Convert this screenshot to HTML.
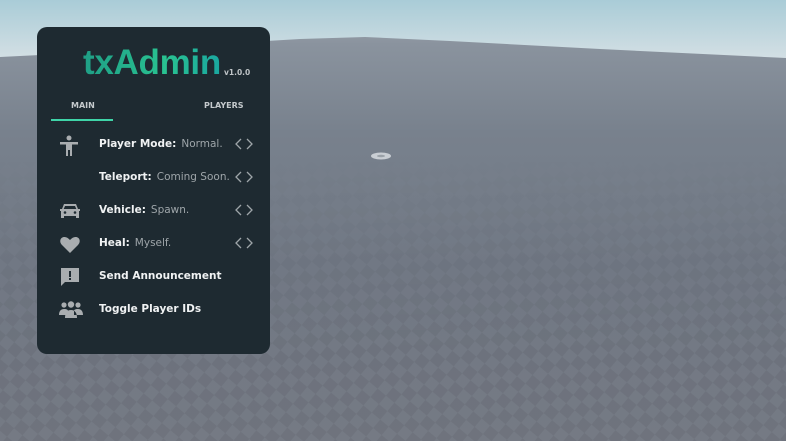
<!DOCTYPE html>
<html><head><meta charset="utf-8"><style>
*{margin:0;padding:0;box-sizing:border-box}
body{width:786px;height:441px;overflow:hidden;position:relative;font-family:"DejaVu Sans","Liberation Sans",sans-serif;background:#6f7682}
svg.bg{position:absolute;left:0;top:0}
.panel{position:absolute;left:37px;top:27px;width:233px;height:327px;background:#1e2a31;border-radius:10px;color:#fff}
.logo{position:absolute;left:46px;top:16px;font-family:"Liberation Sans",sans-serif;font-size:35px;font-weight:bold;letter-spacing:-0.3px;background:linear-gradient(90deg,#1f9f86,#29c291 60%,#1aa7a0);-webkit-background-clip:text;color:transparent}
.ver{position:absolute;left:187px;top:41px;font-size:7.5px;font-weight:bold;color:#bfc4c7}
.tab{position:absolute;top:74px;font-size:8px;font-weight:bold;color:#c5cacd}
.ul{position:absolute;left:14px;top:92px;width:62px;height:2px;background:#3fd4a8}
.row{position:absolute;left:0;width:233px;height:20px;font-size:10.5px}
.row .l{position:absolute;left:62px;top:3px;font-weight:bold;color:#f0f2f3;white-space:nowrap}
.row .v{color:#9ea5a9;font-weight:normal;margin-left:5px}
.row .ar{position:absolute;left:198px;top:3px}
.row svg{position:absolute;left:22px;top:0}
</style></head><body>
<svg class="bg" width="786" height="441">
<defs>
<linearGradient id="sky" x1="0" y1="0" x2="0" y2="1"><stop offset="0" stop-color="#a9ccd7"/><stop offset="1" stop-color="#d3dfe4"/></linearGradient>
<linearGradient id="gr" x1="0" y1="0" x2="0" y2="1"><stop offset="0" stop-color="#a7afb7"/><stop offset="0.1" stop-color="#8a939e"/><stop offset="0.3" stop-color="#78818d"/><stop offset="0.6" stop-color="#717884"/><stop offset="1" stop-color="#757a84"/></linearGradient>
<linearGradient id="fade" x1="0" y1="0" x2="0" y2="1"><stop offset="0.35" stop-color="#fff" stop-opacity="0"/><stop offset="0.8" stop-color="#fff" stop-opacity="1"/></linearGradient>
<mask id="m"><rect width="786" height="441" fill="url(#fade)"/></mask>
<pattern id="ck" width="22" height="22" patternUnits="userSpaceOnUse" patternTransform="rotate(40)"><rect width="11" height="11" fill="#000" opacity="0.05"/><rect x="11" y="11" width="11" height="11" fill="#000" opacity="0.05"/></pattern>
</defs>
<rect width="786" height="441" fill="url(#gr)"/>
<rect width="786" height="441" fill="url(#ck)" mask="url(#m)"/>
<path d="M0 0H786V58L600 49L450 41L365 37L300 39L200 45L100 52L0 57Z" fill="url(#sky)"/>
<ellipse cx="381" cy="156" rx="10" ry="3.5" fill="#c9ced4"/>
<ellipse cx="381" cy="156" rx="4" ry="1.3" fill="#9aa1a8"/>
</svg>
<div class="panel">
<div class="logo">txAdmin</div>
<div class="ver">v1.0.0</div>
<div class="tab" style="left:34px">MAIN</div>
<div class="tab" style="left:167px">PLAYERS</div>
<div class="ul"></div>
<div class="row" style="top:108px"><svg width="20" height="22" viewBox="0 0 20 22"><circle cx="10" cy="3" r="2.5" fill="#a9adb0"/><path d="M1 7h18v2.5h-6V21h-2v-6h-2v6H7V9.5H1z" fill="#a9adb0"/></svg><span class="l">Player Mode:<span class="v">Normal.</span></span><svg class="ar" style="left:198px;top:3px" width="18" height="12" viewBox="0 0 18 12"><path d="M6 1L1 6l5 5M12 1l5 5-5 5" fill="none" stroke="#9ea5a9" stroke-width="1.3"/></svg></div>
<div class="row" style="top:141px"><span class="l">Teleport:<span class="v">Coming Soon.</span></span><svg class="ar" style="left:198px;top:3px" width="18" height="12" viewBox="0 0 18 12"><path d="M6 1L1 6l5 5M12 1l5 5-5 5" fill="none" stroke="#9ea5a9" stroke-width="1.3"/></svg></div>
<div class="row" style="top:174px"><svg width="22" height="20" viewBox="0 0 22 20"><path d="M5 3h12l2 5h2v2h-1v7h-3v-2H5v2H2v-7H1V8h2z" fill="#a9adb0"/><path d="M6 5h10l1.3 3H4.7z" fill="#1e2a31"/><circle cx="6" cy="11.5" r="1.3" fill="#1e2a31"/><circle cx="16" cy="11.5" r="1.3" fill="#1e2a31"/></svg><span class="l">Vehicle:<span class="v">Spawn.</span></span><svg class="ar" style="left:198px;top:3px" width="18" height="12" viewBox="0 0 18 12"><path d="M6 1L1 6l5 5M12 1l5 5-5 5" fill="none" stroke="#9ea5a9" stroke-width="1.3"/></svg></div>
<div class="row" style="top:207px"><svg width="22" height="20" viewBox="0 0 22 20"><path d="M11 19L3 11C0 8 1 3 5.5 3C8 3 10 5 11 6C12 5 14 3 16.5 3C21 3 22 8 19 11Z" fill="#a9adb0"/></svg><span class="l">Heal:<span class="v">Myself.</span></span><svg class="ar" style="left:198px;top:3px" width="18" height="12" viewBox="0 0 18 12"><path d="M6 1L1 6l5 5M12 1l5 5-5 5" fill="none" stroke="#9ea5a9" stroke-width="1.3"/></svg></div>
<div class="row" style="top:240px"><svg width="22" height="20" viewBox="0 0 22 20"><path d="M2 1h18v14H6l-4 4z" fill="#a9adb0"/><rect x="10" y="4" width="2" height="6" fill="#1e2a31"/><rect x="10" y="11" width="2" height="2" fill="#1e2a31"/></svg><span class="l">Send Announcement</span></div>
<div class="row" style="top:273px"><svg width="24" height="20" viewBox="0 0 24 20"><circle cx="5" cy="5" r="2.6" fill="#a9adb0"/><circle cx="19" cy="5" r="2.6" fill="#a9adb0"/><circle cx="12" cy="4.5" r="3.2" fill="#a9adb0"/><path d="M0 15c0-4 2-6 5-6s4 1 4 2v4z M24 15c0-4-2-6-5-6s-4 1-4 2v4z M6 18c0-5 2-8 6-8s6 3 6 8z" fill="#a9adb0"/></svg><span class="l">Toggle Player IDs</span></div>
</div>
</body></html>
